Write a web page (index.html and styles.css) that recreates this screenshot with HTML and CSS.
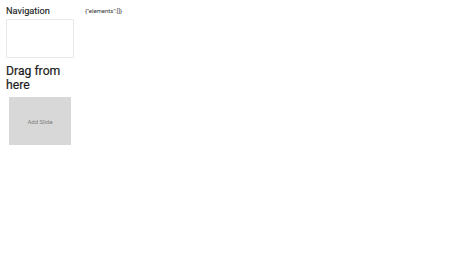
FILE: index.html
```html
<!DOCTYPE html>
<html>
<head>
<meta charset="utf-8">
<link rel="stylesheet" href="styles.css">
</head>
<body>
<div class="app">
  <aside class="sidebar">
    <h2 class="nav-title">Navigation</h2>
    <div class="nav-box"></div>
    <h1 class="drag-title">Drag from here</h1>
    <div class="add-slide">Add Slide</div>
  </aside>
  <main class="content">
    <pre class="json">{"elements":[]}</pre>
  </main>
</div>
</body>
</html>
```
FILE: styles.css
```css
html, body {
  margin: 0;
  padding: 0;
  background: #ffffff;
}
body {
  font-family: Roboto, "Noto Sans", sans-serif;
  color: #1a1a1a;
}
.app {
  display: flex;
  padding: 5px 6px;
  gap: 11px;
}
.sidebar {
  width: 68px;
  display: flex;
  flex-direction: column;
}
.nav-title {
  margin: 0;
  font-size: 9.2px;
  font-weight: 400;
  line-height: 12px;
  color: #1e1e1e;
  -webkit-text-stroke: 0.15px #1e1e1e;
}
.nav-box {
  margin-top: 2px;
  height: 37px;
  border: 1px solid #e8e8e8;
  border-radius: 1px;
}
.drag-title {
  margin: 6px 0 0 0;
  font-size: 12.2px;
  font-weight: 400;
  line-height: 14px;
  color: #1e1e1e;
  -webkit-text-stroke: 0.2px #1e1e1e;
}
.add-slide {
  margin: 5px 3px 0 3px;
  height: 48px;
  background: #d8d8d8;
  color: #808080;
  font-size: 6px;
  display: flex;
  align-items: center;
  justify-content: center;
}
.content {
  flex: 1;
}
.json {
  margin: 2px 0 0 0;
  font-family: Roboto, "Noto Sans", sans-serif;
  font-size: 6px;
  line-height: 8px;
  color: #333;
}
```
